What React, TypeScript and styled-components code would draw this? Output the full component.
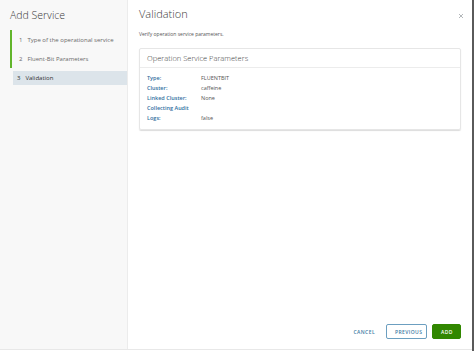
import React from "react";
import styled, { createGlobalStyle } from "styled-components";

const GlobalStyle = createGlobalStyle`
  html, body {
    margin: 0;
    padding: 0;
    background: #ffffff;
    font-family: "Open Sans", "Liberation Sans", sans-serif;
  }
`;

const steps = [
  { num: 1, title: "Type of the operational service", done: true },
  { num: 2, title: "Fluent-Bit Parameters", done: true },
  { num: 3, title: "Validation", done: false },
];

const params = [
  { label: "Type:", value: "FLUENTBIT" },
  { label: "Cluster:", value: "caffeine" },
  { label: "Linked Cluster:", value: "None" },
  { label: "Collecting Audit", value: "" },
  { label: "Logs:", value: "false" },
];

export default function App() {
  return (
    <>
      <GlobalStyle />
      <Page>
        <Modal>
          <Sidebar>
            <SideTitle>Add Service</SideTitle>
            <StepList>
              {steps.map((step) => (
                <Step key={step.num} done={step.done} active={!step.done}>
                  <StepNum>{step.num}</StepNum>
                  {step.title}
                </Step>
              ))}
            </StepList>
          </Sidebar>
          <Content>
            <TopRow>
              <Title>Validation</Title>
              <CloseIcon viewBox="0 0 10 10">
                <path d="M2.5 2.5 L7.5 7.5 M7.5 2.5 L2.5 7.5" stroke="#a8adb0" strokeWidth="1.1" />
              </CloseIcon>
            </TopRow>
            <Hint>Verify operation service parameters.</Hint>
            <Card>
              <CardHeader>Operation Service Parameters</CardHeader>
              <CardBody>
                {params.map((p) => (
                  <ParamRow key={p.label}>
                    <Label>{p.label}</Label>
                    <Value>{p.value}</Value>
                  </ParamRow>
                ))}
              </CardBody>
            </Card>
            <Footer>
              <LinkButton>CANCEL</LinkButton>
              <OutlineButton>PREVIOUS</OutlineButton>
              <SolidButton>ADD</SolidButton>
            </Footer>
          </Content>
        </Modal>
        <Edge />
      </Page>
    </>
  );
}

const Page = styled.div`
  display: flex;
  width: 474px;
  height: 351px;
  overflow: hidden;
`;

const Modal = styled.div`
  flex: 1;
  display: flex;
  height: 349px;
  border-bottom: 1px solid #e8e8e8;
  background: #ffffff;
`;

const Edge = styled.div`
  width: 2px;
  background: #5a5a5a;
`;

const Sidebar = styled.div`
  width: 127px;
  background: #f8f8f8;
  border-right: 1px solid #ececec;
  display: flex;
  flex-direction: column;
  padding-top: 8px;
`;

const SideTitle = styled.div`
  font-size: 10.5px;
  color: #3a3a3a;
  font-weight: 300;
  padding-left: 10px;
  line-height: 14px;
`;

const StepList = styled.div`
  display: flex;
  flex-direction: column;
  margin-top: 8px;
  padding-left: 10px;
`;

const Step = styled.div<{ done: boolean; active: boolean }>`
  display: flex;
  align-items: center;
  height: ${(p) => (p.active ? "14px" : "19px")};
  margin-top: ${(p) => (p.active ? "3px" : "0")};
  margin-left: ${(p) => (p.active ? "3px" : "0")};
  padding-left: ${(p) => (p.active ? "4px" : "7px")};
  font-size: 6px;
  color: ${(p) => (p.active ? "#2e2e2e" : "#6a6a6a")};
  border-left: ${(p) => (p.done ? "2px solid #62b52b" : "none")};
  background: ${(p) => (p.active ? "#dce4ea" : "transparent")};
`;

const StepNum = styled.span`
  margin-right: 5px;
`;

const Content = styled.div`
  flex: 1;
  display: flex;
  flex-direction: column;
  padding: 7px 11px 10px 11px;
`;

const TopRow = styled.div`
  display: flex;
  justify-content: space-between;
  align-items: center;
`;

const Title = styled.div`
  font-size: 11px;
  font-weight: 300;
  color: #3a3a3a;
  line-height: 14px;
`;

const CloseIcon = styled.svg`
  width: 8px;
  height: 8px;
  margin-right: -4px;
  margin-top: 3px;
`;

const Hint = styled.div`
  font-size: 5px;
  color: #555;
  margin-top: 10px;
`;

const Card = styled.div`
  margin-top: 11px;
  border: 1px solid #e6e6e6;
  border-radius: 2px;
  box-shadow: 0 1px 1px #dcdcdc;
  display: flex;
  flex-direction: column;
`;

const CardHeader = styled.div`
  height: 18px;
  display: flex;
  align-items: center;
  padding-left: 7px;
  font-size: 7.5px;
  font-weight: 300;
  color: #444;
  border-bottom: 1px solid #ececec;
`;

const CardBody = styled.div`
  display: flex;
  flex-direction: column;
  padding: 5px 7px 6px 7px;
`;

const ParamRow = styled.div`
  display: flex;
  height: 10px;
  align-items: center;
  font-size: 5.5px;
`;

const Label = styled.span`
  width: 54px;
  color: #2f6e9e;
  font-weight: 600;
`;

const Value = styled.span`
  color: #555;
`;

const Footer = styled.div`
  margin-top: auto;
  display: flex;
  justify-content: flex-end;
  align-items: center;
  gap: 5px;
`;

const ButtonBase = styled.button`
  height: 15px;
  font-family: "Open Sans", "Liberation Sans", sans-serif;
  font-size: 5px;
  font-weight: 600;
  letter-spacing: 0.4px;
  border-radius: 2px;
  padding: 0 8px;
  cursor: pointer;
`;

const LinkButton = styled(ButtonBase)`
  background: none;
  border: none;
  color: #3d7aa3;
  padding: 0 6px 0 0;
`;

const OutlineButton = styled(ButtonBase)`
  background: #ffffff;
  border: 1px solid #6c9fc0;
  color: #3d7aa3;
  width: 41px;
`;

const SolidButton = styled(ButtonBase)`
  background: #318700;
  border: 1px solid #318700;
  color: #ffffff;
  width: 29px;
`;
